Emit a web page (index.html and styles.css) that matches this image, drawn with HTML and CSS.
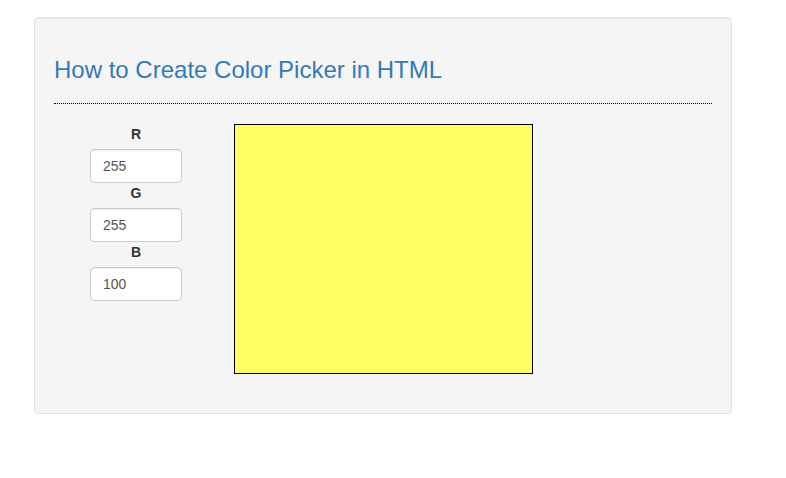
FILE: index.html
```html
<!DOCTYPE html>
<html lang="en">
  <head>
    <meta charset="UTF-8" />
    <title>Color Picker</title>
    <link rel="stylesheet" href="styles.css">
  </head>
  <body>
    <div class="well">
      <h3 class="title">How to Create Color Picker in HTML</h3>
      <hr class="rule" />
      <div class="picker">
        <div class="fields">
          <label for="r">R</label>
          <input type="text" id="r" class="field" value="255" />
          <label for="g">G</label>
          <input type="text" id="g" class="field" value="255" />
          <label for="b">B</label>
          <input type="text" id="b" class="field" value="100" />
        </div>
        <div class="swatch" id="swatch"></div>
      </div>
    </div>
  </body>
</html>
```

FILE: styles.css
```css
body {
  margin: 0;
  background: #fff;
  font-family: "Liberation Sans", Arial, sans-serif;
  font-size: 14px;
  color: #333;
}
.well {
  box-sizing: border-box;
  width: 698px;
  margin: 17px 0 0 34px;
  padding: 19px;
  background: #f5f5f5;
  border: 1px solid #e3e3e3;
  border-radius: 4px;
  box-shadow: inset 0 1px 1px rgba(0, 0, 0, 0.05);
}
.title {
  margin: 20px 0 10px;
  font-size: 24px;
  font-weight: 500;
  line-height: 1.1;
  color: #337ab7;
}
.rule {
  margin: 20px 0;
  border: 0;
  border-top: 1px dotted #000;
}
.picker {
  display: flex;
  align-items: flex-start;
  gap: 16px;
  padding-bottom: 20px;
}
.fields {
  width: 164px;
  display: flex;
  flex-direction: column;
  align-items: center;
}
.fields label {
  display: block;
  font-weight: bold;
  line-height: 20px;
  margin-bottom: 5px;
}
.field {
  box-sizing: border-box;
  width: 92px;
  height: 34px;
  padding: 6px 12px;
  font-family: inherit;
  font-size: 14px;
  color: #555;
  background: #fff;
  border: 1px solid #ccc;
  border-radius: 4px;
  box-shadow: inset 0 1px 1px rgba(0, 0, 0, 0.075);
  outline: none;
}
.swatch {
  box-sizing: border-box;
  width: 299px;
  height: 250px;
  border: 1px solid #000;
  background: rgb(255, 255, 100);
}
```
